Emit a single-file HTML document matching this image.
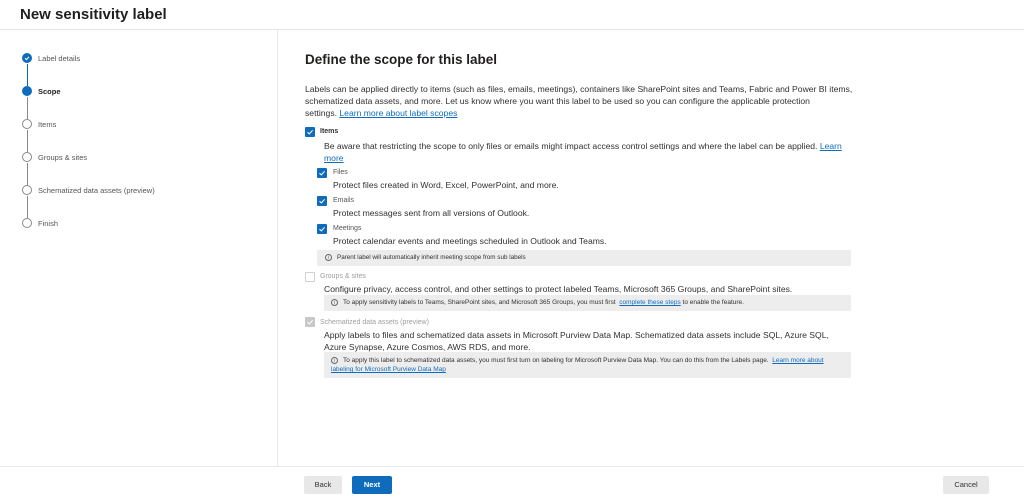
<!DOCTYPE html><html><head><style>
*{margin:0;padding:0;box-sizing:border-box}
body{width:1024px;height:498px;background:#fff;font-family:"Liberation Sans",sans-serif;color:#323130;position:relative;overflow:hidden}
.a{position:absolute;white-space:nowrap}
.t{font-size:8.6px}
a{color:#0f6cbd;text-decoration:underline}
.cb{position:absolute;width:10px;height:10px;background:#0f6cbd;border-radius:1px}
.cb svg{position:absolute;left:1px;top:1px}
.info{position:absolute;background:#ededed;font-size:6.3px;color:#323130}
.ic{display:inline-block;width:7px;height:7px;border:0.8px solid #666;border-radius:50%;font-size:5px;text-align:center;line-height:6px;margin-right:5px;vertical-align:middle;color:#666}
.st{position:absolute;left:22px;width:10px;height:10px;border-radius:50%;border:1.3px solid #8a8886;background:#fff}
.ln{position:absolute;left:26.5px;width:1px;background:#8a8886}
.sl{position:absolute;left:38px;font-size:7.5px;color:#555}
.btn{position:absolute;top:476px;height:18px;font-size:7.5px;text-align:center;line-height:18px;border-radius:2px}
</style></head><body>
<div class="a" style="left:20px;top:6px;font-size:15px;font-weight:bold;color:#201f1e">New sensitivity label</div>
<div class="a" style="left:0;top:29px;width:1024px;height:1px;background:#e5e5e5"></div>
<div class="a" style="left:277px;top:30px;width:1px;height:436px;background:#e8e8e8"></div>

<div class="ln" style="top:64px;height:22px;background:#0f6cbd"></div>
<div class="ln" style="top:97px;height:22px"></div>
<div class="ln" style="top:130px;height:22px"></div>
<div class="ln" style="top:163px;height:22px"></div>
<div class="ln" style="top:196px;height:22px"></div>
<div class="st" style="top:53px;background:#0f6cbd;border-color:#0f6cbd"><svg width="8" height="8" style="position:absolute;left:0;top:0" viewBox="0 0 8 8"><path d="M2 4.2l1.5 1.4L6 2.8" stroke="#fff" stroke-width="1" fill="none"/></svg></div>
<div class="sl" style="top:54px">Label details</div>
<div class="st" style="top:86px;background:#0f6cbd;border-color:#0f6cbd"></div>
<div class="sl" style="top:87px;font-weight:bold;color:#201f1e">Scope</div>
<div class="st" style="top:119px"></div><div class="sl" style="top:120px">Items</div>
<div class="st" style="top:152px"></div><div class="sl" style="top:153px">Groups &amp; sites</div>
<div class="st" style="top:185px"></div><div class="sl" style="top:186px">Schematized data assets (preview)</div>
<div class="st" style="top:218px"></div><div class="sl" style="top:219px">Finish</div>

<div class="a" style="left:305px;top:52px;font-size:13.5px;font-weight:bold;color:#201f1e">Define the scope for this label</div>
<div class="a t" style="left:305px;top:83px;line-height:12px;white-space:normal;width:549px">Labels can be applied directly to items (such as files, emails, meetings), containers like SharePoint sites and Teams, Fabric and Power BI items, schematized data assets, and more. Let us know where you want this label to be used so you can configure the applicable protection<br>settings. <a>Learn more about label scopes</a></div>

<div class="cb" style="left:305px;top:127px"><svg width="8" height="8" viewBox="0 0 8 8"><path d="M1.5 4.2l1.8 1.7L6.6 2.3" stroke="#fff" stroke-width="1" fill="none"/></svg></div>
<div class="a" style="left:320px;top:128px;font-size:7px;font-weight:bold">Items</div>
<div class="a t" style="left:324px;top:141px;line-height:11.5px;white-space:normal;width:532px">Be aware that restricting the scope to only files or emails might impact access control settings and where the label can be applied. <a>Learn more</a></div>

<div class="cb" style="left:317px;top:168px"><svg width="8" height="8" viewBox="0 0 8 8"><path d="M1.5 4.2l1.8 1.7L6.6 2.3" stroke="#fff" stroke-width="1" fill="none"/></svg></div>
<div class="a" style="left:333px;top:169px;font-size:7px;color:#555">Files</div>
<div class="a t" style="left:333px;top:180px">Protect files created in Word, Excel, PowerPoint, and more.</div>
<div class="cb" style="left:317px;top:196px"><svg width="8" height="8" viewBox="0 0 8 8"><path d="M1.5 4.2l1.8 1.7L6.6 2.3" stroke="#fff" stroke-width="1" fill="none"/></svg></div>
<div class="a" style="left:333px;top:197px;font-size:7px;color:#555">Emails</div>
<div class="a t" style="left:333px;top:208px">Protect messages sent from all versions of Outlook.</div>
<div class="cb" style="left:317px;top:224px"><svg width="8" height="8" viewBox="0 0 8 8"><path d="M1.5 4.2l1.8 1.7L6.6 2.3" stroke="#fff" stroke-width="1" fill="none"/></svg></div>
<div class="a" style="left:333px;top:225px;font-size:7px;color:#555">Meetings</div>
<div class="a t" style="left:333px;top:236px">Protect calendar events and meetings scheduled in Outlook and Teams.</div>
<div class="info" style="left:317px;top:250px;width:534px;height:16px;padding:4px 0 0 8px"><span class="ic">i</span>Parent label will automatically inherit meeting scope from sub labels</div>

<div class="cb" style="left:305px;top:272px;background:#fff;border:1px solid #d0d0d0"></div>
<div class="a" style="left:320px;top:273px;font-size:7px;color:#a19f9d">Groups &amp; sites</div>
<div class="a t" style="left:324px;top:284px">Configure privacy, access control, and other settings to protect labeled Teams, Microsoft 365 Groups, and SharePoint sites.</div>
<div class="info" style="left:324px;top:295px;width:527px;height:16px;padding:4px 0 0 7px;font-size:6.5px"><span class="ic">i</span>To apply sensitivity labels to Teams, SharePoint sites, and Microsoft 365 Groups, you must first &nbsp;<a>complete these steps</a> to enable the feature.</div>

<div class="cb" style="left:305px;top:317px;background:#c8c8c8"><svg width="8" height="8" viewBox="0 0 8 8"><path d="M1.5 4.2l1.8 1.7L6.6 2.3" stroke="#fff" stroke-width="1" fill="none"/></svg></div>
<div class="a" style="left:320px;top:319px;font-size:7px;color:#a19f9d">Schematized data assets (preview)</div>
<div class="a t" style="left:324px;top:329px;line-height:12px;white-space:normal;width:528px">Apply labels to files and schematized data assets in Microsoft Purview Data Map. Schematized data assets include SQL, Azure SQL, Azure Synapse, Azure Cosmos, AWS RDS, and more.</div>
<div class="info" style="left:324px;top:352px;width:527px;height:26px;padding:4px 8px 0 7px;line-height:9px;white-space:normal;font-size:6.5px"><span class="ic">i</span>To apply this label to schematized data assets, you must first turn on labeling for Microsoft Purview Data Map. You can do this from the Labels page. &nbsp;<a>Learn more about<br>labeling for Microsoft Purview Data Map</a></div>

<div class="a" style="left:0;top:466px;width:1024px;height:1px;background:#e8e8e8"></div>
<div class="btn" style="left:304px;width:38px;background:#e8e8e8">Back</div>
<div class="btn" style="left:352px;width:40px;background:#0f6cbd;color:#fff;font-weight:bold">Next</div>
<div class="btn" style="left:943px;width:46px;background:#e8e8e8">Cancel</div>
</body></html>
